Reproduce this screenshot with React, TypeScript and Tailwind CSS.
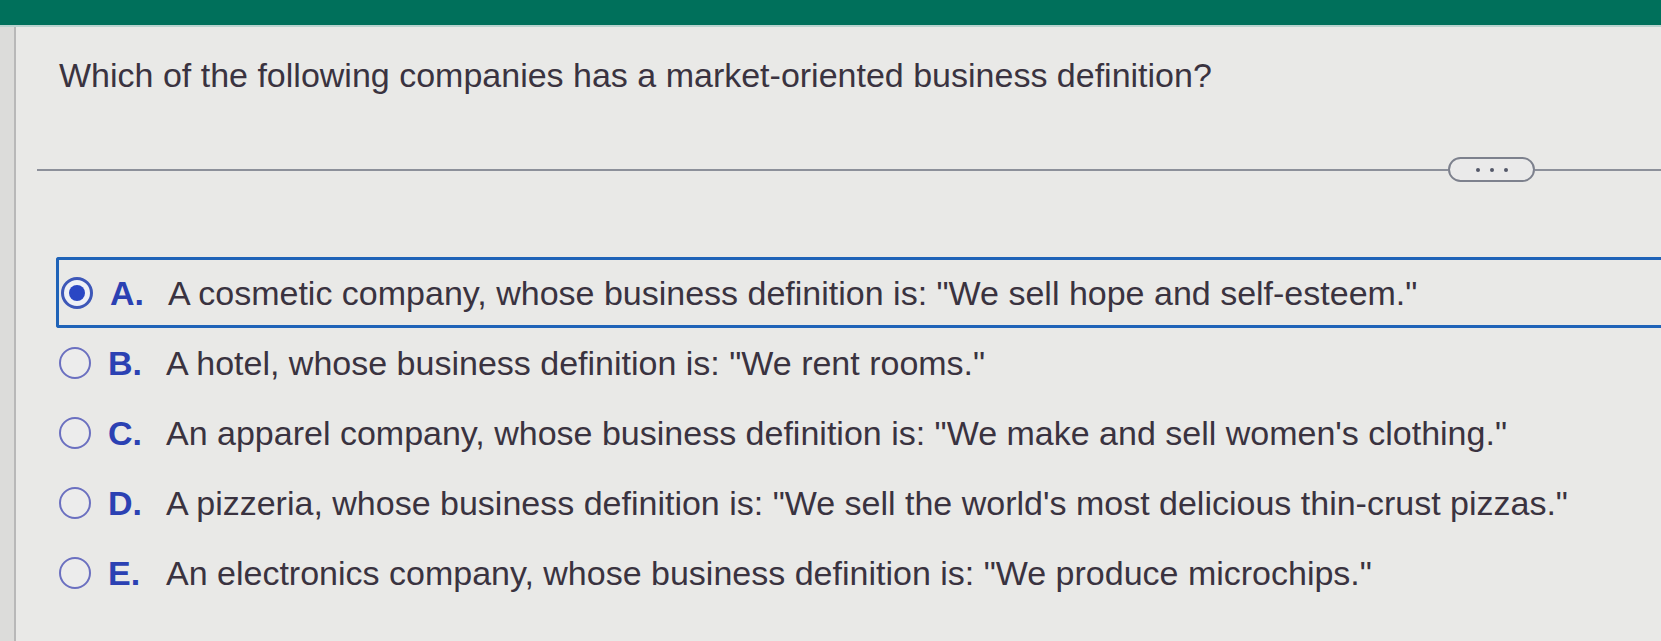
const options = [
  { letter: "A.", text: "A cosmetic company, whose business definition is: \"We sell hope and self-esteem.\"" },
  { letter: "B.", text: "A hotel, whose business definition is: \"We rent rooms.\"" },
  { letter: "C.", text: "An apparel company, whose business definition is: \"We make and sell women's clothing.\"" },
  { letter: "D.", text: "A pizzeria, whose business definition is: \"We sell the world's most delicious thin-crust pizzas.\"" },
  { letter: "E.", text: "An electronics company, whose business definition is: \"We produce microchips.\"" },
];

const Radio = ({ checked }: { checked: boolean }) => {
  return checked ? (
    <div className="flex items-center justify-center w-[32px] h-[32px] rounded-full border-[3px] border-[#3d57b8] bg-[#eef0f6]">
      <div className="w-[16px] h-[16px] rounded-full bg-[#2a47c4]" />
    </div>
  ) : (
    <div className="w-[32px] h-[32px] rounded-full border-[2.5px] border-[#6b70c0] bg-[#ececec]" />
  );
};

export default function App() {
  return (
    <div
      className="flex flex-col w-full h-[641px] overflow-hidden bg-[#e9e9e7] text-[#3a3340]"
      style={{ fontFamily: '"Liberation Sans", Arial, sans-serif' }}
    >
      {/* top bar */}
      <div className="h-[27px] shrink-0 bg-[#00705b] border-b-2 border-[#b9d3cf]" />

      <div className="flex flex-1">
        {/* left strip */}
        <div className="w-[16px] shrink-0 bg-[#dcdcda] border-r-2 border-[#b8b8b8]" />

        <div className="flex flex-col flex-1 min-w-0">
          {/* question */}
          <p className="pl-[43px] pt-[31px] text-[34px] leading-none whitespace-nowrap">
            Which of the following companies has a market-oriented business definition?
          </p>

          {/* separator */}
          <div className="flex items-center h-[25px] mt-[65px] ml-[21px]">
            <div className="w-[1411px] h-[2px] bg-[#8c909a]" />
            <div className="flex items-center justify-center gap-[10px] w-[87px] h-[25px] rounded-full border-2 border-[#7d818d] bg-[#eaeaea]">
              <span className="w-[4px] h-[4px] rounded-full bg-[#55596a]" />
              <span className="w-[4px] h-[4px] rounded-full bg-[#55596a]" />
              <span className="w-[4px] h-[4px] rounded-full bg-[#55596a]" />
            </div>
            <div className="flex-1 h-[2px] bg-[#8c909a]" />
          </div>

          {/* answers */}
          <div className="flex flex-col mt-[75px]">
            {options.map((o, i) =>
              i === 0 ? (
                <div
                  key={o.letter}
                  className="flex items-center h-[71px] ml-[40px] pl-[2px] border-y-[3px] border-l-[3px] border-[#1f63b8] rounded-l-[3px]"
                >
                  <Radio checked />
                  <span className="w-[58px] ml-[17px] text-[34px] leading-none font-bold text-[#2b41b3]">
                    {o.letter}
                  </span>
                  <span className="text-[34px] leading-none whitespace-nowrap">{o.text}</span>
                </div>
              ) : (
                <div key={o.letter} className="flex items-center h-[70px] ml-[43px]">
                  <Radio checked={false} />
                  <span className="w-[58px] ml-[17px] text-[34px] leading-none font-bold text-[#2b41b3]">
                    {o.letter}
                  </span>
                  <span className="text-[34px] leading-none whitespace-nowrap">{o.text}</span>
                </div>
              )
            )}
          </div>
        </div>
      </div>
    </div>
  );
}
